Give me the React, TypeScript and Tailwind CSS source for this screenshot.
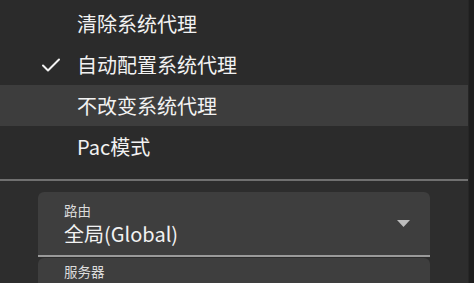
import React from 'react';

const font = { fontFamily: '"Noto Sans CJK SC", "Noto Sans", sans-serif' };

const items = [
  { label: '清除系统代理', checked: false, active: false },
  { label: '自动配置系统代理', checked: true, active: false },
  { label: '不改变系统代理', checked: false, active: true },
  { label: 'Pac模式', checked: false, active: false },
];

function Check() {
  return (
    <svg width="20" height="16" viewBox="0 0 20 16" fill="none" stroke="#f2f2f2" strokeWidth="2" strokeLinecap="round" strokeLinejoin="round">
      <polyline points="2 8.5 7 13.5 18 2.5" />
    </svg>
  );
}

export default function App() {
  return (
    <div className="flex w-[474px] h-[283px] overflow-hidden bg-[#2c2c2c] text-[#f2f2f2]" style={font}>
      <div className="flex flex-col w-[468px] overflow-hidden">
        <div className="shrink-0 bg-[#2b2b2b] pt-[3px] pb-[12px]">
          {items.map((it) => (
            <div
              key={it.label}
              className={`flex items-center h-[41px] ${it.active ? 'bg-[#3d3d3d]' : ''}`}
            >
              <div className="w-[77px] flex justify-end pr-[16px]">{it.checked && <Check />}</div>
              <span className="text-[20px] leading-none">{it.label}</span>
            </div>
          ))}
        </div>
        <div className="shrink-0 h-[2px] bg-[#707070]" />
        <div className="shrink-0 bg-[#2d2d2d] pt-[11px] pl-[38px] pr-[38px]">
          <div className="rounded-t-[6px] bg-[#3e3e3e] border-b-2 border-[#9a9a9a] h-[65px] flex items-center pl-[26px] pr-[20px]">
            <div className="flex-1 flex flex-col">
              <span className="text-[13.5px] leading-none text-[#dcdcdc] mt-[1px]">路由</span>
              <span className="text-[20px] leading-none mt-[6px]">全局(Global)</span>
            </div>
            <svg width="13" height="8" viewBox="0 0 13 8">
              <polygon points="0 0 13 0 6.5 7" fill="#bdbdbd" />
            </svg>
          </div>
          <div className="mt-[1px] rounded-t-[6px] bg-[#3e3e3e] h-[40px] pl-[26px] pt-[7px]">
            <span className="block text-[13.5px] leading-none text-[#dcdcdc]">服务器</span>
          </div>
        </div>
      </div>
      <div className="shrink-0 w-[6px] bg-[#1e1e1e] border-l border-[#262626]" />
    </div>
  );
}
